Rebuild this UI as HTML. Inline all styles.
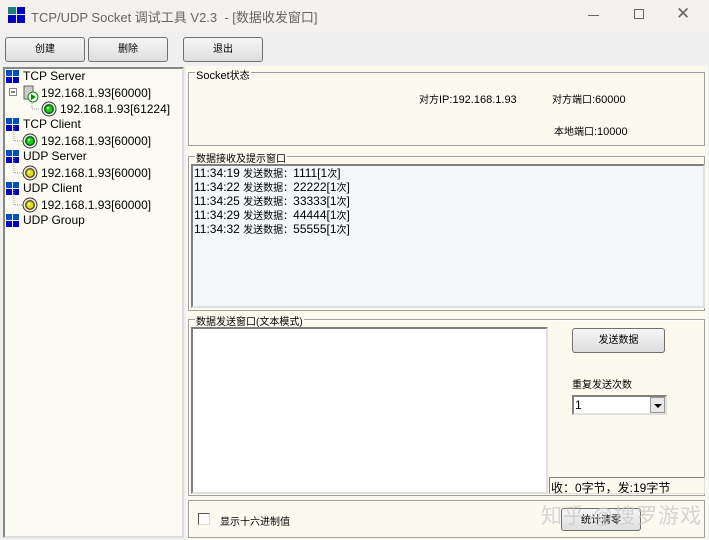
<!DOCTYPE html>
<html><head><meta charset="utf-8"><style>
*{margin:0;padding:0;box-sizing:border-box}
body{width:709px;height:540px;overflow:hidden;background:#f0f0f0;font-family:"Liberation Sans","Noto Sans CJK SC",sans-serif;font-size:12px;color:#000;position:relative}
.a{position:absolute}
.btn{position:absolute;border:1px solid #707070;border-radius:3px;background:linear-gradient(#f6f6f6,#dedede);font-size:11px;text-align:center;line-height:22px}
.cn{font-size:10px}
.grp{position:absolute;border:1px solid #a0a0a0;box-shadow:inset 1px 1px 0 #fff}
.lg{position:absolute;top:-7px;left:6px;background:inherit;font-size:10px;padding:0 1px}
.sunk{position:absolute;border:1px solid #808080;border-right-color:#e0e0e0;border-bottom-color:#e0e0e0}
.ti{position:absolute;font-size:12px;white-space:nowrap}
</style></head><body>
<div class="a" style="left:0;top:0;width:709px;height:32px;background:#f4f1ee"></div>
<svg class="a" style="left:8px;top:7px" width="17" height="16"><rect x="0" y="0" width="8" height="7" fill="#1a8080"/><rect x="9" y="0" width="8" height="7" fill="#0000c0"/><rect x="0" y="8" width="8" height="8" fill="#0000c0"/><rect x="9" y="8" width="8" height="8" fill="#0000c0"/></svg>
<div class="a" style="left:31px;top:7px;font-size:13px;color:#666">TCP/UDP Socket 调试工具 V2.3 &nbsp;- [数据收发窗口]</div>
<div class="a" style="left:588px;top:15px;width:11px;height:1px;background:#666"></div>
<div class="a" style="left:634px;top:9px;width:10px;height:10px;border:1px solid #666"></div>
<div class="a" style="left:676px;top:4px;font-size:17px;color:#666;font-weight:300">✕</div>

<div class="btn" style="left:5px;top:37px;width:80px;height:25px"><span class="cn">创建</span></div>
<div class="btn" style="left:88px;top:37px;width:80px;height:25px"><span class="cn">删除</span></div>
<div class="btn" style="left:183px;top:37px;width:80px;height:25px"><span class="cn">退出</span></div>

<div class="sunk" style="left:3px;top:67px;width:181px;height:471px;background:#fbfbf2;border:2px solid #888;border-right-color:#ddd;border-bottom-color:#ddd"></div>
<svg class="a" style="left:0;top:0" width="190" height="230">
<defs><g id="q"><rect width="6" height="6" fill="#0050c0"/><rect x="7" width="6" height="6" fill="#0050c0"/><rect y="7" width="6" height="6" fill="#0000c0"/><rect x="7" y="7" width="6" height="6" fill="#0000c0"/></g>
<g id="g"><circle r="7" fill="#eee" stroke="#333"/><circle r="5" fill="#060"/><circle r="3.5" fill="#2c2"/><circle cx="-1" cy="-1" r="1.2" fill="#bfb"/></g>
<g id="y"><circle r="7" fill="#eee" stroke="#333"/><circle r="5" fill="#650"/><circle r="3.5" fill="#dd2"/><circle cx="-1" cy="-1" r="1.2" fill="#ffb"/></g></defs>
<use href="#q" x="6" y="70"/><use href="#q" x="6" y="118"/><use href="#q" x="6" y="150"/><use href="#q" x="6" y="182"/><use href="#q" x="6" y="214"/>
<rect x="9.5" y="88.5" width="7" height="7" fill="#fff" stroke="#888"/><line x1="11" y1="92" x2="15" y2="92" stroke="#000"/>
<rect x="24" y="86" width="9" height="13" fill="#ccc" stroke="#666"/><circle cx="33" cy="97" r="5" fill="#fff" stroke="#080"/><path d="M31 94 L36 97 L31 100Z" fill="#080"/>
<path d="M32 101 V109 H40 M14 126 V141 H22 M14 158 V173 H22 M14 190 V205 H22" stroke="#999" stroke-dasharray="1 1" fill="none"/>
<use href="#g" x="49" y="109"/><use href="#g" x="30" y="141"/><use href="#y" x="30" y="173"/><use href="#y" x="30" y="205"/>
</svg>
<div class="ti" style="left:23px;top:69px">TCP Server</div>
<div class="ti" style="left:41px;top:86px">192.168.1.93[60000]</div>
<div class="ti" style="left:60px;top:102px">192.168.1.93[61224]</div>
<div class="ti" style="left:23px;top:117px">TCP Client</div>
<div class="ti" style="left:41px;top:134px">192.168.1.93[60000]</div>
<div class="ti" style="left:23px;top:149px">UDP Server</div>
<div class="ti" style="left:41px;top:166px">192.168.1.93[60000]</div>
<div class="ti" style="left:23px;top:181px">UDP Client</div>
<div class="ti" style="left:41px;top:198px">192.168.1.93[60000]</div>
<div class="ti" style="left:23px;top:213px">UDP Group</div>

<div class="a" style="left:186px;top:66px;width:522px;height:474px;background:#fcf9ee"></div>
<div class="grp" style="left:188px;top:72px;width:517px;height:74px;background:#fcf9ee"><div class="lg" style="left:6px;top:-6px;font-size:11px">Socket<span class="cn">状态</span></div></div>
<div class="a" style="left:419px;top:91px;font-size:11px"><span class="cn">对方</span>IP:192.168.1.93</div>
<div class="a" style="left:552px;top:91px;font-size:11px"><span class="cn">对方端口</span>:60000</div>
<div class="a" style="left:554px;top:123px;font-size:11px"><span class="cn">本地端口</span>:10000</div>

<div class="grp" style="left:188px;top:156px;width:517px;height:155px;background:#fcf9ee"><div class="lg">数据接收及提示窗口</div></div>
<div class="sunk" style="left:191px;top:164px;width:514px;height:144px;background:#f4f6f9;border-width:2px"></div>
<div class="a" style="left:194px;top:167px;font-size:12px;line-height:13px">11:34:19 <span class="cn">发送数据：</span>1111[1<span class="cn">次</span>]<br>11:34:22 <span class="cn">发送数据：</span>22222[1<span class="cn">次</span>]<br>11:34:25 <span class="cn">发送数据：</span>33333[1<span class="cn">次</span>]<br>11:34:29 <span class="cn">发送数据：</span>44444[1<span class="cn">次</span>]<br>11:34:32 <span class="cn">发送数据：</span>55555[1<span class="cn">次</span>]</div>

<div class="grp" style="left:188px;top:319px;width:517px;height:177px;background:#fcf9ee"><div class="lg">数据发送窗口(文本模式)</div></div>
<div class="sunk" style="left:191px;top:327px;width:357px;height:167px;background:#fff;border-width:2px"></div>
<div class="btn" style="left:572px;top:328px;width:93px;height:25px"><span class="cn">发送数据</span></div>
<div class="a cn" style="left:572px;top:376px">重复发送次数</div>
<div class="sunk" style="left:572px;top:395px;width:95px;height:20px;background:#fff;border-width:2px"></div>
<div class="a" style="left:575px;top:398px;font-size:12px">1</div>
<div class="a" style="left:650px;top:397px;width:15px;height:16px;background:#e8e8e8;border:1px solid #999"></div>
<div class="a" style="left:654px;top:404px;width:0;height:0;border-left:4px solid transparent;border-right:4px solid transparent;border-top:4px solid #000"></div>
<div class="sunk" style="left:549px;top:477px;width:156px;height:17px;background:#fcf9ee"></div>
<div class="a" style="left:551px;top:479px;font-size:12px">收：0字节，发:19字节</div>

<div class="grp" style="left:188px;top:500px;width:517px;height:38px;background:#fcf9ee"></div>
<div class="a" style="left:198px;top:513px;width:12px;height:12px;background:#fff;border:1px solid #555;border-right-color:#ddd;border-bottom-color:#ddd"></div>
<div class="a cn" style="left:220px;top:513px">显示十六进制值</div>
<div class="btn" style="left:561px;top:508px;width:80px;height:23px"><span class="cn">统计清零</span></div>
<div class="a" style="left:541px;top:500px;font-size:21px;color:rgba(200,200,200,0.75);letter-spacing:1px">知乎 @搜罗游戏</div>
</body></html>
